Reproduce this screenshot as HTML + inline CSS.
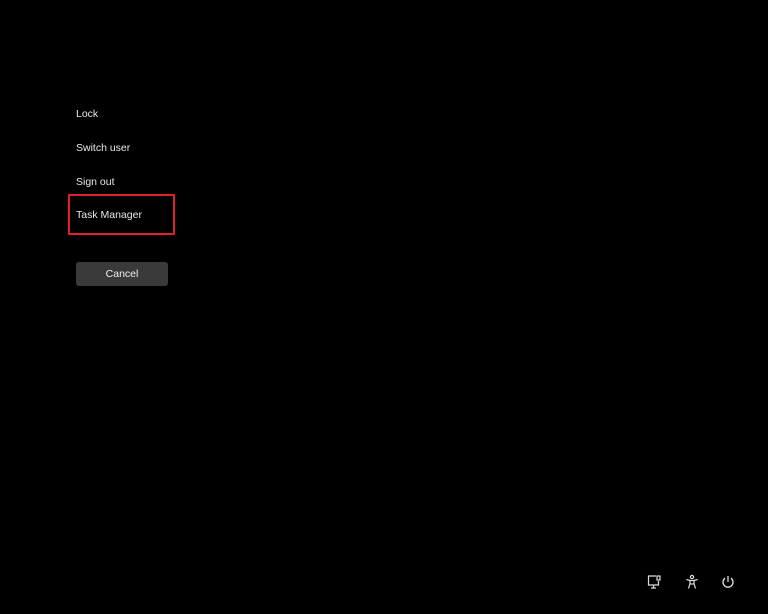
<!DOCTYPE html>
<html><head><style>
body{margin:0;width:768px;height:614px;background:#000;overflow:hidden;font-family:"Liberation Sans",sans-serif;color:#e8e8e8;position:relative}
.t{position:absolute;left:76px;font-size:10.5px}
.box{position:absolute;left:68px;top:194px;width:103px;height:37px;border:2px solid #e0202a;border-radius:1px}
.btn{position:absolute;left:76px;top:262px;width:92px;height:24px;background:#3a3a3a;border-radius:3px;font-size:10.5px;text-align:center;line-height:25px;color:#eee}
svg{position:absolute}
</style></head><body>
<div class="t" style="top:108px">Lock</div>
<div class="t" style="top:142px">Switch user</div>
<div class="t" style="top:176px">Sign out</div>
<div class="t" style="top:209px">Task Manager</div>
<div class="box"></div>
<div class="btn">Cancel</div>
<svg style="left:646px;top:574px" width="16" height="16" viewBox="0 0 16 16" fill="none" stroke="#ddd" stroke-width="1.2"><path d="M10 2H2.5v9h10V7"/><path d="M7.5 11v3M5 14h5"/><rect x="11" y="2" width="3" height="4"/></svg>
<svg style="left:684px;top:574px" width="16" height="16" viewBox="0 0 16 16" fill="none" stroke="#ddd" stroke-width="1.2"><circle cx="8" cy="3" r="1.6"/><path d="M2.5 5.5 6 6.5h4l3.5-1M6 6.5v3L4.5 14.5M10 6.5v3l1.5 5M6.5 10h3"/></svg>
<svg style="left:720px;top:574px" width="16" height="16" viewBox="0 0 16 16" fill="none" stroke="#ddd" stroke-width="1.3"><path d="M8 2v6"/><path d="M5 4.2A5 5 0 1 0 11 4.2"/></svg>
</body></html>
